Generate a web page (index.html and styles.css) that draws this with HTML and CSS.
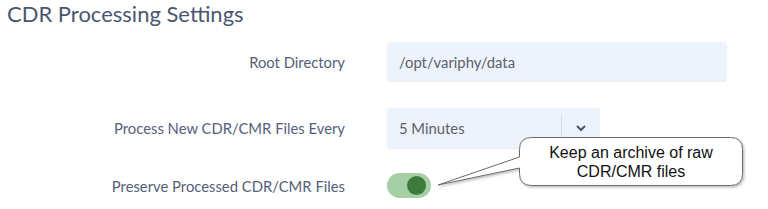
FILE: index.html
```html
<!DOCTYPE html>
<html>
<head>
<meta charset="utf-8">
<link rel="stylesheet" href="styles.css">
</head>
<body>
<div class="panel">
  <h2 class="title">CDR Processing Settings</h2>
  <div class="form">
    <div class="row row-root">
      <label class="label">Root Directory</label>
      <div class="input">/opt/variphy/data</div>
    </div>
    <div class="row row-every">
      <label class="label">Process New CDR/CMR Files Every</label>
      <div class="select">
        <span class="select-value">5 Minutes</span>
        <span class="select-arrow">
          <svg width="12" height="8" viewBox="0 0 12 8"><path d="M2 2 L6 6 L10 2" fill="none" stroke="#4a5670" stroke-width="2"/></svg>
        </span>
      </div>
    </div>
    <div class="row row-preserve">
      <label class="label">Preserve Processed CDR/CMR Files</label>
      <div class="toggle"><span class="thumb"></span></div>
    </div>
  </div>
  <div class="callout">
    <svg class="callout-svg" width="330" height="60" viewBox="0 0 330 60">
      <defs>
        <filter id="sh" x="-10%" y="-20%" width="130%" height="150%">
          <feDropShadow dx="1.5" dy="1.5" stdDeviation="1" flood-color="#000" flood-opacity="0.25"/>
        </filter>
      </defs>
      <path filter="url(#sh)" d="M89.5 12.5 Q89.5 0.5 101.5 0.5 L300.5 0.5 Q312.5 0.5 312.5 12.5 L312.5 36.5 Q312.5 48.5 300.5 48.5 L101.5 48.5 Q89.5 48.5 89.5 36.5 L89.5 31 L8 48 L89.5 20 Z" fill="#fff" stroke="#6a6a6a" stroke-width="1"/>
    </svg>
    <div class="callout-text">Keep an archive of raw<br>CDR/CMR files</div>
  </div>
</div>
</body>
</html>
```
FILE: styles.css
```css
html, body {
  margin: 0;
  padding: 0;
  background: #fff;
}
.panel {
  position: relative;
  width: 768px;
  height: 209px;
  font-family: Lato, "Open Sans", sans-serif;
}
.title {
  margin: 0;
  padding: 0 0 0 7px;
  font-size: 22px;
  font-weight: 400;
  color: #4a5670;
  line-height: 27px;
}
.form {
  display: flex;
  flex-direction: column;
  padding-top: 15px;
}
.row {
  display: grid;
  grid-template-columns: 345px auto;
  column-gap: 42px;
  align-items: center;
}
.label {
  text-align: right;
  font-size: 14.8px;
  color: #56607a;
}
.row-every { margin-top: 27px; }
.row-preserve { margin-top: 25px; }
.input {
  width: 340px;
  height: 39px;
  box-sizing: border-box;
  padding: 0 12px;
  display: flex;
  align-items: center;
  background: #edf3fd;
  border-radius: 3px;
  box-shadow: 0 1px 1px rgba(0,0,0,0.08);
  font-size: 14.8px;
  color: #5c6068;
}
.select {
  width: 213px;
  height: 40px;
  box-sizing: border-box;
  display: flex;
  align-items: center;
  background: #edf3fd;
  border-radius: 3px;
  box-shadow: 0 1px 1px rgba(0,0,0,0.08);
  font-size: 14.8px;
  color: #5c6068;
}
.select-value {
  flex: 1;
  padding-left: 12px;
}
.select-arrow {
  width: 38px;
  height: 26px;
  border-left: 1px solid #d7dde6;
  display: flex;
  align-items: center;
  justify-content: center;
}
.toggle {
  width: 44px;
  height: 25px;
  border-radius: 13px;
  background: #a6cfa6;
  position: relative;
}
.thumb {
  position: absolute;
  width: 19px;
  height: 19px;
  border-radius: 50%;
  background: #3d7b3d;
  left: 20px;
  top: 3px;
}
.callout {
  position: absolute;
  left: 430px;
  top: 137px;
  width: 330px;
  height: 60px;
}
.callout-svg {
  position: absolute;
  left: 0;
  top: 0;
}
.callout-text {
  position: absolute;
  left: 89px;
  top: 6px;
  width: 224px;
  text-align: center;
  font-family: "Liberation Sans", Arial, sans-serif;
  font-size: 16px;
  line-height: 19px;
  color: #111;
}
```
